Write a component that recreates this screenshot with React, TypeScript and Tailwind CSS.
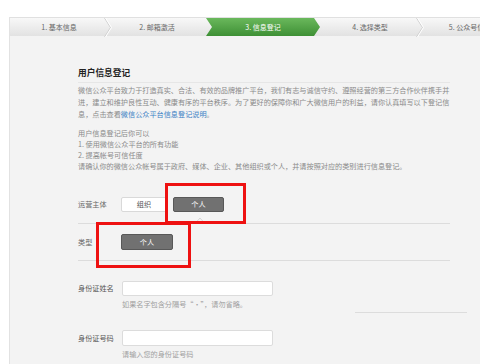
import React from "react";

const Chevron = () => (
  <svg width="8" height="19" viewBox="0 0 8 19" className="absolute right-[-4px] top-0">
    <polyline points="0.5,0 6.5,9.5 0.5,19" fill="none" stroke="#cfcfcf" strokeWidth="1" />
    <polyline points="1.5,0 7.5,9.5 1.5,19" fill="none" stroke="#ffffff" strokeWidth="1" />
  </svg>
);

export default function App() {
  return (
    <div
      className="relative w-[480px] h-[364px] overflow-hidden bg-white"
      style={{ fontFamily: "'Noto Sans CJK SC', 'Noto Sans', sans-serif" }}
    >
      <div className="ml-[9px] mt-[17px] w-[520px] h-[347px] bg-[#f3f3f3] border-l border-[#e2e2e2]">
        {/* steps */}
        <div className="flex h-[19px] bg-gradient-to-b from-[#f8f8f8] to-[#e2e2e2] border-t border-[#e0e0e0] text-[7px] text-[#666] leading-[18px]">
          <div className="relative w-[98px] flex items-center justify-center">
            <span>1. 基本信息</span>
            <Chevron />
          </div>
          <div className="w-[98px] flex items-center justify-center">
            <span>2. 邮箱激活</span>
          </div>
          <div className="w-[114px] flex items-center justify-center text-white bg-gradient-to-b from-[#6ab85c] to-[#3e9035] [clip-path:polygon(0_0,108px_0,114px_50%,108px_100%,0_100%,6px_50%)]">
            <span>3. 信息登记</span>
          </div>
          <div className="relative w-[100px] flex items-center justify-center">
            <span>4. 选择类型</span>
            <Chevron />
          </div>
          <div className="w-[100px] flex items-center justify-center">
            <span>5. 公众号信息</span>
          </div>
        </div>

        {/* content */}
        <div className="pl-[68px]">
          <div className="mt-[31px] h-[12px] leading-[12px] text-[8.7px] font-bold text-[#222]">用户信息登记</div>
          <div className="mt-[3px] w-[372px] h-px bg-[#e6e6e6]" />
          <div className="mt-[1px] text-[7.15px] leading-[12px] text-[#8a8a8a] whitespace-nowrap">
            <div>微信公众平台致力于打造真实、合法、有效的品牌推广平台，我们有志与诚信守约、遵照经营的第三方合作伙伴携手并</div>
            <div>进，建立和维护良性互动、健康有序的平台秩序。为了更好的保障你和广大微信用户的利益，请你认真填写以下登记信</div>
            <div>
              息，点击查看<span className="text-[#3b7fc4]">微信公众平台信息登记说明</span>。
            </div>
          </div>
          <div className="mt-[8px] text-[7.15px] leading-[11px] text-[#8a8a8a] whitespace-nowrap">
            <div>用户信息登记后你可以</div>
            <div>1. 使用微信公众平台的所有功能</div>
            <div>2. 提高帐号可信任度</div>
            <div>请确认你的微信公众帐号属于政府、媒体、企业、其他组织或个人，并请按照对应的类别进行信息登记。</div>
          </div>

          {/* 运营主体 */}
          <div className="mt-[25px] flex items-center h-[15px] text-[7.15px]">
            <div className="w-[43px] text-[#666]">运营主体</div>
            <div className="w-[46px] h-[15px] flex items-center justify-center bg-white border border-[#d9d9d9] rounded-[2px] text-[#555]">组织</div>
            <div className="ml-[6px] w-[51px] h-[15px] flex items-center justify-center bg-[#717171] border border-[#585858] rounded-[2px] text-white">个人</div>
          </div>
          <div className="relative mt-[11px] w-[372px] h-px bg-[#dcdcdc]">
            <svg width="10" height="6" viewBox="0 0 10 6" className="absolute left-[117px] top-[-6px]">
              <polyline points="0.5,6 5,1 9.5,6" fill="#f3f3f3" stroke="#d6d6d6" strokeWidth="1" />
            </svg>
          </div>

          {/* 类型 */}
          <div className="mt-[10px] flex items-center h-[16px] text-[7.15px]">
            <div className="w-[43px] text-[#666]">类型</div>
            <div className="w-[52px] h-[16px] flex items-center justify-center bg-[#717171] border border-[#585858] rounded-[2px] text-white">个人</div>
          </div>
          <div className="mt-[10px] w-[372px] h-px bg-[#dcdcdc]" />

          {/* 身份证姓名 */}
          <div className="mt-[20px] flex items-center h-[15px] text-[7.15px]">
            <div className="w-[44px] text-[#555]">身份证姓名</div>
            <div className="w-[151px] h-[15px] bg-white border border-[#dcdcdc] rounded-[2px]" />
          </div>
          <div className="mt-[3px] pl-[44px] h-[10px] leading-[10px] text-[7.15px] text-[#a0a0a0] whitespace-nowrap">如果名字包含分隔号“·”，请勿省略。</div>
          <div className="mt-[3px] ml-[277px] w-[112px] h-px bg-[#dcdcdc]" />

          {/* 身份证号码 */}
          <div className="mt-[17px] flex items-center h-[16px] text-[7.15px]">
            <div className="w-[44px] text-[#555]">身份证号码</div>
            <div className="w-[151px] h-[16px] bg-white border border-[#dcdcdc] rounded-[2px]" />
          </div>
          <div className="mt-[3px] pl-[44px] h-[10px] leading-[10px] text-[7.15px] text-[#a0a0a0] whitespace-nowrap">请输入您的身份证号码</div>
        </div>
      </div>

      {/* red highlight boxes */}
      <div className="absolute left-[165px] top-[183px] w-[81px] h-[41px] border-[3px] border-[#ee1111]" />
      <div className="absolute left-[96px] top-[222px] w-[95px] h-[46px] border-[3px] border-[#ee1111]" />
    </div>
  );
}
